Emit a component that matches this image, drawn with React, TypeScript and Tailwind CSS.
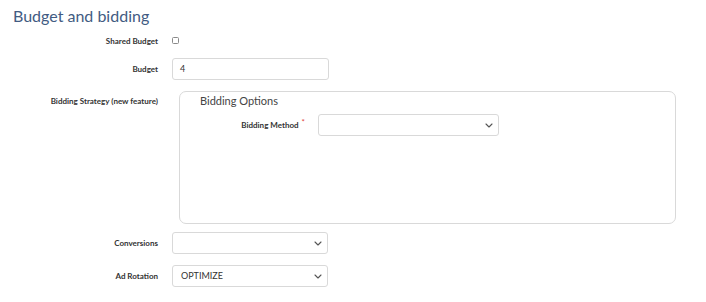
import React from "react";

const Chevron = () => (
  <svg width="8" height="5" viewBox="0 0 8 5" fill="none" className="shrink-0">
    <path d="M1 1 L4 4 L7 1" stroke="#555" strokeWidth="1.1" strokeLinecap="round" strokeLinejoin="round" />
  </svg>
);

const Select = ({ value, w }: { value?: string; w: string }) => (
  <div
    className={`${w} h-[22px] border border-[#d9d9d9] rounded-[3px] bg-white flex items-center justify-between pl-[8px] pr-[5px] text-[9px] text-[#333]`}
  >
    <span>{value ?? ""}</span>
    <Chevron />
  </div>
);

const Label = ({ children }: { children: React.ReactNode }) => (
  <div className="w-[158px] shrink-0 text-right text-[8px] font-bold text-[#333] leading-[12px]">{children}</div>
);

export default function App() {
  return (
    <div className="w-[706px] h-[302px] bg-white" style={{ fontFamily: "Lato, 'Noto Sans', sans-serif" }}>
      <div className="pt-[6px] pl-[13px] text-[16px] leading-[20px] text-[#425b82]">Budget and bidding</div>

      <div className="flex flex-col">
        {/* Shared Budget */}
        <div className="mt-[9px] h-[12px] flex items-center gap-[14px]">
          <Label>Shared Budget</Label>
          <div className="w-[7px] h-[7px] border border-[#8a8a8a] rounded-[1.5px] bg-white -mt-[1px]" />
        </div>

        {/* Budget */}
        <div className="mt-[11px] flex items-center gap-[14px]">
          <Label>Budget</Label>
          <div className="w-[157px] h-[22px] border border-[#d9d9d9] rounded-[3px] flex items-center pl-[7px] text-[9px] text-[#333]">
            4
          </div>
        </div>

        {/* Bidding Strategy */}
        <div className="mt-[11px] flex items-start gap-[14px]">
          <div className="pt-[4px]">
            <Label>Bidding Strategy (new feature)</Label>
          </div>
          <div className="ml-[7px] w-[497px] h-[133px] border border-[#d9d9d9] rounded-[7px] pt-[1px]">
            <div className="pl-[20px] text-[11px] leading-[16px] text-[#444]">Bidding Options</div>
            <div className="mt-[5px] flex items-center">
              <div className="w-[125px] flex justify-end items-start">
                <span className="text-[8px] font-bold text-[#333] leading-[12px]">Bidding Method</span>
                <span className="ml-[3px] text-[8px] leading-[8px] text-[#e03a3a] -mt-[1px]">*</span>
              </div>
              <div className="ml-[13px]">
                <Select w="w-[181px]" />
              </div>
            </div>
          </div>
        </div>

        {/* Conversions */}
        <div className="mt-[8px] flex items-center gap-[14px]">
          <Label>Conversions</Label>
          <Select w="w-[156px]" />
        </div>

        {/* Ad Rotation */}
        <div className="mt-[11px] flex items-center gap-[14px]">
          <Label>Ad Rotation</Label>
          <Select w="w-[156px]" value="OPTIMIZE" />
        </div>
      </div>
    </div>
  );
}
